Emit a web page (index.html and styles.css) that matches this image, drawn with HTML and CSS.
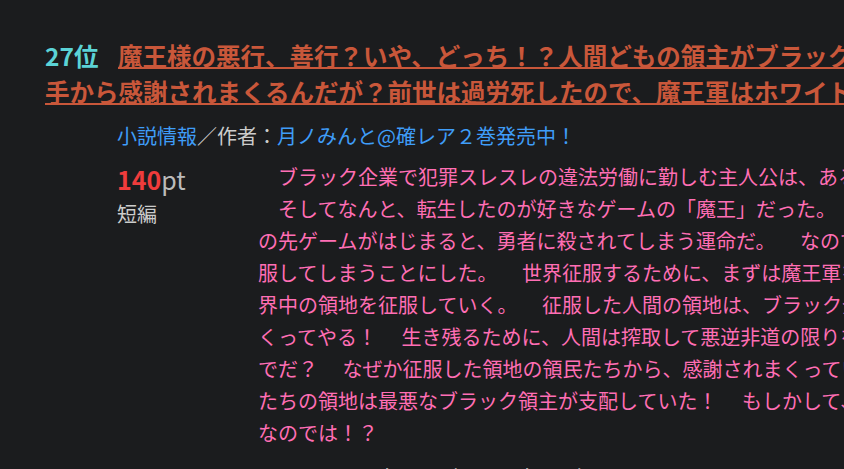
FILE: index.html
```html
<!DOCTYPE html>
<html lang="ja">
<head>
<meta charset="utf-8">
<title>ランキング</title>
<link rel="stylesheet" href="styles.css">
</head>
<body>
<div class="entry">
  <h2 class="title-line"><span class="rank">27位</span><a class="title" href="#">魔王様の悪行、善行？いや、どっち！？人間どもの領主がブラックすぎたので、俺が支配したら相手から感謝されまくるんだが？前世は過労死したので、魔王軍はホワイト企業です</a></h2>
  <div class="meta">
    <div class="info"><a href="#">小説情報</a>／作者：<a href="#">月ノみんと@確レア２巻発売中！</a></div>
    <div class="detail">
      <div class="side">
        <div class="point"><b>140</b>pt</div>
        <div class="type">短編</div>
      </div>
      <div class="body">
        <p class="story">　ブラック企業で犯罪スレスレの違法労働に勤しむ主人公は、ある日過労死してしまう。 　そしてなんと、転生したのが好きなゲームの「魔王」だった。 　だが、このままだとこの先ゲームがはじまると、勇者に殺されてしまう運命だ。 　なので、先に人間の世界を征服してしまうことにした。 　世界征服するために、まずは魔王軍を率いて、人間たちの世界中の領地を征服していく。 　征服した人間の領地は、ブラック企業のように、搾取しまくってやる！ 　生き残るために、人間は搾取して悪逆非道の限りを尽くす。 　なのになんでだ？ 　なぜか征服した領地の領民たちから、感謝されまくっている。 　どうやら、領民たちの領地は最悪なブラック領主が支配していた！ 　もしかして、俺は人間たちの救世主なのでは！？</p>
        <div class="genre">　ハイファンタジー〔ファンタジー〕</div>
      </div>
    </div>
  </div>
</div>
</body>
</html>
```

FILE: styles.css
```css
html, body {
  margin: 0;
  padding: 0;
  background: #1b1c1e;
}

body {
  overflow: hidden;
  height: 469px;
  font-family: "Noto Sans CJK JP", "Noto Sans", sans-serif;
  color: #cccccc;
}

.entry {
  padding: 38px 0 0 45px;
  width: 1300px;
}

.title-line {
  width: 1165px;
  margin: 0;
  font-size: 24.5px;
  line-height: 36px;
  font-weight: bold;
}

.rank {
  display: inline-block;
  width: 73px;
  color: #5bd3d6;
}

.title {
  color: #c9573a;
  text-decoration: underline;
  text-decoration-thickness: 2px;
}

.meta {
  margin: 10px 0 0 72px;
}

.info {
  font-size: 20px;
  line-height: 32px;
  color: #cccccc;
}

.info a {
  color: #3f9df8;
  text-decoration: none;
}

.detail {
  display: grid;
  grid-template-columns: 141px 810px;
  margin-top: 9px;
}

.point {
  font-size: 25px;
  line-height: 32px;
  padding-top: 2px;
  color: #bbbbbb;
}

.point b {
  color: #f03c3c;
}

.type {
  font-size: 20px;
  line-height: 32px;
  margin-top: 3px;
  color: #cccccc;
}

.story {
  margin: 0;
  font-size: 20px;
  line-height: 32px;
  color: #ff6eb4;
}

.genre {
  margin-top: 12px;
  font-size: 20px;
  line-height: 32px;
  color: #cccccc;
}
```
